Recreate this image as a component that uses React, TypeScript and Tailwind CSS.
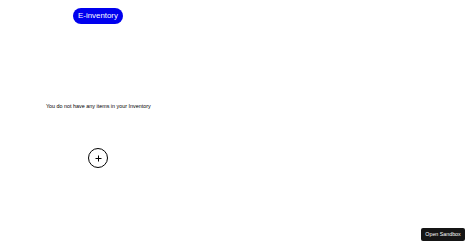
export default function App() {
  return (
    <div className="relative h-[248px] w-[474px] bg-white font-['Liberation_Sans',Arial,sans-serif]">
      <div className="flex w-[196px] flex-col items-center pt-[8px]">
        <span className="flex h-[16px] w-[50px] items-center justify-center rounded-full bg-[#0000ee] text-[7.9px] text-white">
          E-inventory
        </span>
      </div>
      <p className="ml-[46px] mt-[78px] text-[5.4px] leading-[8px] text-black">
        You do not have any items in your Inventory
      </p>
      <div className="ml-[88px] mt-[38px] flex h-[20px] w-[20px] items-center justify-center rounded-full border border-black">
        <svg width="7" height="7" viewBox="0 0 7 7" fill="none" stroke="black" strokeWidth="1">
          <path d="M3.5 0.5v6M0.5 3.5h6" />
        </svg>
      </div>
      <button className="absolute left-[421px] top-[228px] flex h-[13px] w-[44px] items-center justify-center rounded-[2px] bg-[#151515] text-[5.3px] text-white">
        Open Sandbox
      </button>
    </div>
  );
}
